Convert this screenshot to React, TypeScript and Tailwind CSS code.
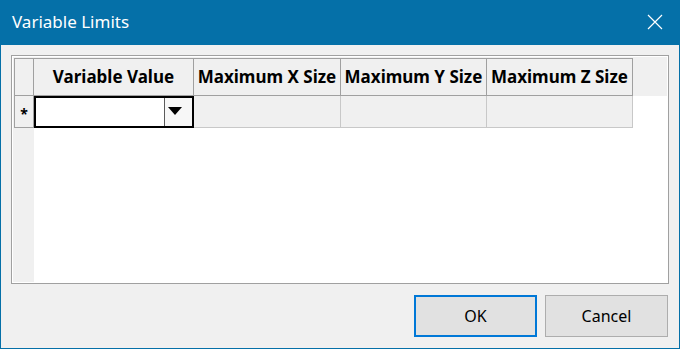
import React from 'react';

const columns = [
  { label: 'Variable Value', w: 'w-[160px]' },
  { label: 'Maximum X Size', w: 'w-[147px]' },
  { label: 'Maximum Y Size', w: 'w-[146px]' },
  { label: 'Maximum Z Size', w: 'w-[146px]' },
];

export default function App() {
  return (
    <div className="w-[680px] h-[349px] flex flex-col bg-[#f0f0f0] border border-t-0 border-[#0570a8] font-['Noto_Sans',sans-serif] text-black">
      {/* title bar */}
      <div className="h-[45px] shrink-0 bg-[#0570a8] flex items-center justify-between pl-[11px] pr-[16px] text-white">
        <span className="text-[17px] leading-none pb-[2px]">Variable Limits</span>
        <svg width="16" height="16" viewBox="0 0 16 16" className="mb-px">
          <path d="M1 1 L15 15 M15 1 L1 15" stroke="white" strokeWidth="1.2" />
        </svg>
      </div>

      {/* body */}
      <div className="flex-1 flex flex-col px-[10px] pt-[10px]">
        {/* grid */}
        <div className="h-[229px] shrink-0 border border-[#a0a0a0] bg-white p-px flex flex-col">
          {/* header row */}
          <div className="flex h-[39px] bg-[#f0f0f0] pl-px pt-px">
            <div className="w-[20px] border border-[#a0a0a0]" />
            {columns.map((c) => (
              <div
                key={c.label}
                className={`${c.w} border-t border-b border-r border-[#a0a0a0] flex items-center justify-center text-[17px] font-bold whitespace-nowrap`}
              >
                {c.label}
              </div>
            ))}
          </div>

          {/* new row */}
          <div className="flex h-[32px]">
            <div className="w-px bg-[#f0f0f0]" />
            <div className="w-[20px] border-l border-r border-b border-[#a0a0a0] bg-[#f0f0f0] flex items-center justify-center text-[14px] font-bold pt-[3px]">
              *
            </div>
            <div className="w-[160px] border-2 border-black bg-white flex">
              <div className="flex-1" />
              <div className="w-[28px] border-l border-[#5a5a5a] bg-[#f7f7f7] flex items-center pl-[3px] pb-[2px]">
                <svg width="14" height="8" viewBox="0 0 14 8">
                  <path d="M0 0 H14 L7 8 Z" fill="black" />
                </svg>
              </div>
            </div>
            <div className="w-[147px] border-r border-b border-[#c8c8c8] bg-[#f0f0f0]" />
            <div className="w-[146px] border-r border-b border-[#c8c8c8] bg-[#f0f0f0]" />
            <div className="w-[146px] border-r border-b border-[#c8c8c8] bg-[#f0f0f0]" />
          </div>

          {/* empty area */}
          <div className="flex-1 flex">
            <div className="w-[21px] bg-[#f0f0f0]" />
          </div>
        </div>

        {/* buttons */}
        <div className="mt-[11px] flex justify-end gap-[8px] pr-px">
          <button className="w-[123px] h-[42px] border-2 border-[#0078d7] bg-[#e1e1e1] text-[16px]">
            OK
          </button>
          <button className="w-[123px] h-[42px] border border-[#adadad] bg-[#e1e1e1] text-[16px]">
            Cancel
          </button>
        </div>
      </div>
    </div>
  );
}
